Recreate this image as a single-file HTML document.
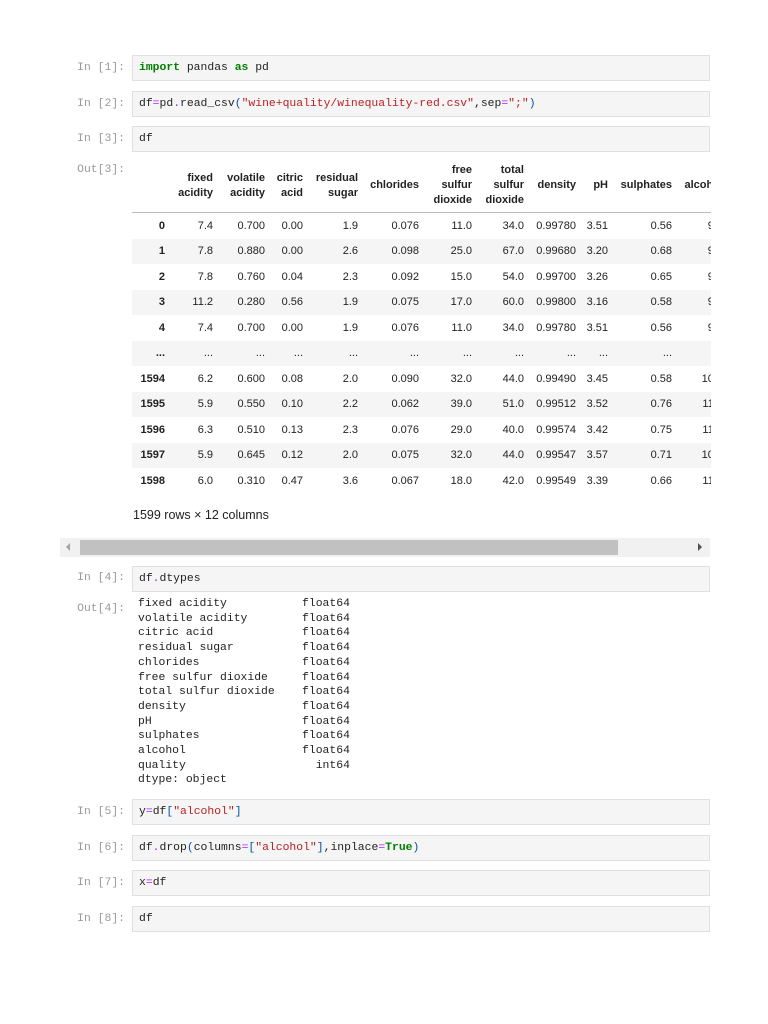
<!DOCTYPE html>
<html><head><meta charset="utf-8"><style>
body{margin:0;background:#fff;width:768px;height:1024px;position:relative;overflow:hidden}
.p{position:absolute;right:643px;font:11.4px "Liberation Mono",monospace;color:#9a9a9a;text-align:right;white-space:pre}
.c{position:absolute;left:132px;width:570px;height:24px;background:#f5f5f5;border:1px solid #e0e0e0;font:11.4px/24px "Liberation Mono",monospace;color:#222;padding-left:6px;box-sizing:content-box;white-space:pre}
.k{color:#008000;font-weight:bold}.s{color:#ba2121}.o{color:#aa22ff}.b{color:#0055aa}
.tw{position:absolute;left:132px;top:159px;width:579px;height:336px;overflow:hidden}
table{border-collapse:collapse;font:11px "Liberation Sans",sans-serif;color:#222;table-layout:fixed;width:608px}
th,td{padding:0 5px;text-align:right;white-space:nowrap;overflow:hidden}
thead th{font-weight:bold;line-height:15px;vertical-align:middle;height:53px;border-bottom:1px solid #bbb}
tbody td,tbody th{height:25.5px;padding-top:0;padding-bottom:0}
tbody th{font-weight:bold}
tbody tr:nth-child(even){background:#f5f5f5}
pre{position:absolute;left:138px;top:597px;margin:0;font:11.4px/14.7px "Liberation Mono",monospace;color:#222}
</style></head><body>
<div class="p" style="top:62px">In [1]:</div>
<div class="c" style="top:55px"><span class="k">import</span> pandas <span class="k">as</span> pd</div>
<div class="p" style="top:98px">In [2]:</div>
<div class="c" style="top:91px">df<span class="o">=</span>pd<span class="o">.</span>read_csv<span class="b">(</span><span class="s">"wine+quality/winequality-red.csv"</span>,sep<span class="o">=</span><span class="s">";"</span><span class="b">)</span></div>
<div class="p" style="top:133px">In [3]:</div>
<div class="c" style="top:126px">df</div>
<div class="p" style="top:164px">Out[3]:</div>
<div class="tw"><table>
<colgroup><col style="width:38px"><col style="width:48px"><col style="width:52px"><col style="width:38px"><col style="width:55px"><col style="width:61px"><col style="width:53px"><col style="width:52px"><col style="width:52px"><col style="width:32px"><col style="width:64px"><col style="width:51px"><col style="width:60px"></colgroup>
<thead><tr><th></th><th>fixed<br>acidity</th><th>volatile<br>acidity</th><th>citric<br>acid</th><th>residual<br>sugar</th><th>chlorides</th><th>free<br>sulfur<br>dioxide</th><th>total<br>sulfur<br>dioxide</th><th>density</th><th>pH</th><th>sulphates</th><th>alcohol</th><th>quality</th></tr></thead>
<tbody>
<tr><th>0</th><td>7.4</td><td>0.700</td><td>0.00</td><td>1.9</td><td>0.076</td><td>11.0</td><td>34.0</td><td>0.99780</td><td>3.51</td><td>0.56</td><td>9.4</td><td>5</td></tr>
<tr><th>1</th><td>7.8</td><td>0.880</td><td>0.00</td><td>2.6</td><td>0.098</td><td>25.0</td><td>67.0</td><td>0.99680</td><td>3.20</td><td>0.68</td><td>9.8</td><td>5</td></tr>
<tr><th>2</th><td>7.8</td><td>0.760</td><td>0.04</td><td>2.3</td><td>0.092</td><td>15.0</td><td>54.0</td><td>0.99700</td><td>3.26</td><td>0.65</td><td>9.8</td><td>5</td></tr>
<tr><th>3</th><td>11.2</td><td>0.280</td><td>0.56</td><td>1.9</td><td>0.075</td><td>17.0</td><td>60.0</td><td>0.99800</td><td>3.16</td><td>0.58</td><td>9.8</td><td>6</td></tr>
<tr><th>4</th><td>7.4</td><td>0.700</td><td>0.00</td><td>1.9</td><td>0.076</td><td>11.0</td><td>34.0</td><td>0.99780</td><td>3.51</td><td>0.56</td><td>9.4</td><td>5</td></tr>
<tr><th>...</th><td>...</td><td>...</td><td>...</td><td>...</td><td>...</td><td>...</td><td>...</td><td>...</td><td>...</td><td>...</td><td>...</td><td>...</td></tr>
<tr><th>1594</th><td>6.2</td><td>0.600</td><td>0.08</td><td>2.0</td><td>0.090</td><td>32.0</td><td>44.0</td><td>0.99490</td><td>3.45</td><td>0.58</td><td>10.5</td><td>5</td></tr>
<tr><th>1595</th><td>5.9</td><td>0.550</td><td>0.10</td><td>2.2</td><td>0.062</td><td>39.0</td><td>51.0</td><td>0.99512</td><td>3.52</td><td>0.76</td><td>11.2</td><td>6</td></tr>
<tr><th>1596</th><td>6.3</td><td>0.510</td><td>0.13</td><td>2.3</td><td>0.076</td><td>29.0</td><td>40.0</td><td>0.99574</td><td>3.42</td><td>0.75</td><td>11.0</td><td>6</td></tr>
<tr><th>1597</th><td>5.9</td><td>0.645</td><td>0.12</td><td>2.0</td><td>0.075</td><td>32.0</td><td>44.0</td><td>0.99547</td><td>3.57</td><td>0.71</td><td>10.2</td><td>5</td></tr>
<tr><th>1598</th><td>6.0</td><td>0.310</td><td>0.47</td><td>3.6</td><td>0.067</td><td>18.0</td><td>42.0</td><td>0.99549</td><td>3.39</td><td>0.66</td><td>11.0</td><td>6</td></tr>
</tbody></table></div>
<div style="position:absolute;left:133px;top:508px;font:12.5px 'Liberation Sans',sans-serif;color:#222">1599 rows × 12 columns</div>
<div style="position:absolute;left:60px;top:538px;width:650px;height:19px;background:#f1f1f1"></div>
<div style="position:absolute;left:80px;top:540px;width:538px;height:15px;background:#c1c1c1"></div>
<div style="position:absolute;left:66px;top:543px;width:0;height:0;border-right:4px solid #a3a3a3;border-top:4px solid transparent;border-bottom:4px solid transparent"></div>
<div style="position:absolute;left:698px;top:543px;width:0;height:0;border-left:4px solid #505050;border-top:4px solid transparent;border-bottom:4px solid transparent"></div>
<div class="p" style="top:572px">In [4]:</div>
<div class="c" style="top:566px">df<span class="o">.</span>dtypes</div>
<div class="p" style="top:603px">Out[4]:</div>
<pre>fixed acidity           float64
volatile acidity        float64
citric acid             float64
residual sugar          float64
chlorides               float64
free sulfur dioxide     float64
total sulfur dioxide    float64
density                 float64
pH                      float64
sulphates               float64
alcohol                 float64
quality                   int64
dtype: object</pre>
<div class="p" style="top:806px">In [5]:</div>
<div class="c" style="top:799px">y<span class="o">=</span>df<span class="b">[</span><span class="s">"alcohol"</span><span class="b">]</span></div>
<div class="p" style="top:842px">In [6]:</div>
<div class="c" style="top:835px">df<span class="o">.</span>drop<span class="b">(</span>columns<span class="o">=</span><span class="b">[</span><span class="s">"alcohol"</span><span class="b">]</span>,inplace<span class="o">=</span><span class="k">True</span><span class="b">)</span></div>
<div class="p" style="top:877px">In [7]:</div>
<div class="c" style="top:870px">x<span class="o">=</span>df</div>
<div class="p" style="top:913px">In [8]:</div>
<div class="c" style="top:906px">df</div>
</body></html>
